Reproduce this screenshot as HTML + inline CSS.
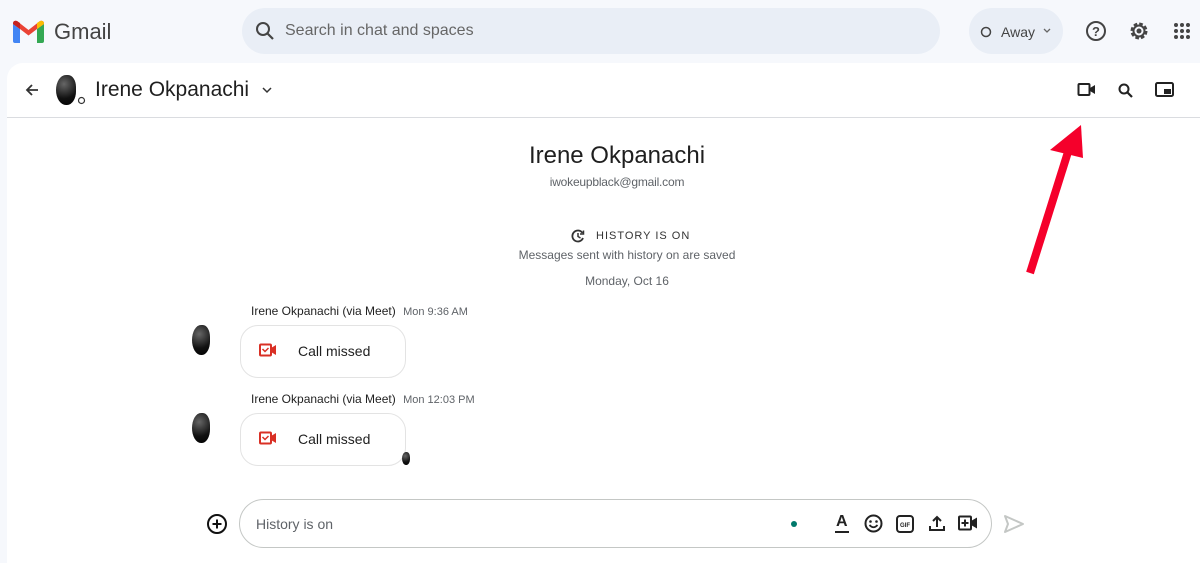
<!DOCTYPE html>
<html><head><meta charset="utf-8"><style>
*{margin:0;padding:0;box-sizing:border-box}
body{width:1200px;height:556px;background:#f6f8fc;font-family:"Liberation Sans",sans-serif;position:relative;overflow:hidden;color:#1f1f1f}
.abs{position:absolute}
.card{left:7px;top:63px;width:1200px;height:500px;background:#fff;border-radius:16px 0 0 0}
.search{left:242px;top:8px;width:698px;height:46px;background:#e9eef6;border-radius:24px}
.away{left:969px;top:8px;width:94px;height:46px;background:#e9eef6;border-radius:24px}
.txt{white-space:nowrap}
.bubble{width:166px;height:53px;border:1px solid #e3e3e3;border-radius:18px;background:#fff}
.av{width:18px;height:30px;border-radius:50% 40% 45% 50%;background:radial-gradient(circle at 40% 30%,#666,#111 60%,#000)}
</style></head><body>
<svg class="abs" style="left:13px;top:20px" width="31" height="23" viewBox="0 0 31 23">
<path d="M0 4 L0 21 Q0 23 2 23 L7 23 L7 9 Z" fill="#4285f4"/>
<path d="M24 9 L24 23 L29 23 Q31 23 31 21 L31 4 Z" fill="#34a853"/>
<path d="M0 4 Q0 0 4 1 L15.5 10 L27 1 Q31 0 31 4 L24 9 L15.5 15.5 L7 9 Z" fill="#ea4335"/>
<path d="M24 9 L24 3 L27 1 Q31 0 31 4 Z" fill="#fbbc04"/>
<path d="M0 4 Q0 0 4 1 L7 3 L7 9 Z" fill="#c5221f"/>
</svg>
<div class="abs txt" style="left:54px;top:19px;font-size:22px;color:#444">Gmail</div>
<div class="abs search"></div>
<svg class="abs" style="left:255px;top:21px" width="20" height="20" viewBox="0 0 20 20"><circle cx="8" cy="8" r="6" fill="none" stroke="#444" stroke-width="2"/><path d="M12.5 12.5 L18 18" stroke="#444" stroke-width="2.2"/></svg>
<div class="abs txt" style="left:285px;top:22px;font-size:16px;color:#666">Search in chat and spaces</div>
<div class="abs away"></div>
<svg class="abs" style="left:980px;top:26px" width="12" height="12"><circle cx="6" cy="6" r="4.5" fill="none" stroke="#444" stroke-width="1.5"/></svg>
<div class="abs txt" style="left:1001px;top:24px;font-size:14px;color:#444">Away</div>
<svg class="abs" style="left:1042px;top:27px" width="10" height="8"><path d="M2 2 L5 5 L8 2" fill="none" stroke="#666" stroke-width="1.3"/></svg>
<svg class="abs" style="left:1085px;top:20px" width="22" height="22"><circle cx="11" cy="11" r="9" fill="none" stroke="#444" stroke-width="2"/><text x="11" y="16" font-size="13" text-anchor="middle" fill="#444" font-family="Liberation Sans" font-weight="bold">?</text></svg>
<svg class="abs" style="left:1128px;top:20px" width="22" height="22" viewBox="0 0 22 22"><circle cx="11" cy="11" r="7" fill="none" stroke="#444" stroke-width="3" stroke-dasharray="3.5 2"/><circle cx="11" cy="11" r="5.5" fill="none" stroke="#444" stroke-width="2"/><circle cx="11" cy="11" r="2.5" fill="#444"/></svg>
<svg class="abs" style="left:1173px;top:22px" width="18" height="18"><g fill="#444"><circle cx="3" cy="3" r="2"/><circle cx="9" cy="3" r="2"/><circle cx="15" cy="3" r="2"/><circle cx="3" cy="9" r="2"/><circle cx="9" cy="9" r="2"/><circle cx="15" cy="9" r="2"/><circle cx="3" cy="15" r="2"/><circle cx="9" cy="15" r="2"/><circle cx="15" cy="15" r="2"/></g></svg>

<div class="abs card"></div>
<div class="abs" style="left:7px;top:117px;width:1193px;height:1px;background:#dadce0"></div>
<svg class="abs" style="left:24px;top:82px" width="16" height="16"><path d="M14 8 H3 M8 3 L3 8 L8 13" fill="none" stroke="#333" stroke-width="1.8"/></svg>
<div class="abs av" style="left:56px;top:75px;width:20px;height:30px"></div>
<svg class="abs" style="left:77px;top:96px" width="9" height="9"><circle cx="4.5" cy="4.5" r="3" fill="#fff" stroke="#333" stroke-width="1.2"/></svg>
<div class="abs txt" style="left:95px;top:78px;font-size:21px;color:#1f1f1f">Irene Okpanachi</div>
<svg class="abs" style="left:261px;top:86px" width="12" height="8"><path d="M2 2 L6 6 L10 2" fill="none" stroke="#333" stroke-width="1.5"/></svg>
<svg class="abs" style="left:1077px;top:82px" width="20" height="16"><rect x="1.5" y="2" width="11" height="11" rx="1" fill="none" stroke="#222" stroke-width="2"/><path d="M13 6 L18 3 V12 L13 9 Z" fill="#222"/></svg>
<svg class="abs" style="left:1117px;top:82px" width="18" height="18"><circle cx="7" cy="7" r="4.5" fill="none" stroke="#222" stroke-width="2"/><path d="M10.5 10.5 L15 15" stroke="#222" stroke-width="2.2"/></svg>
<svg class="abs" style="left:1155px;top:82px" width="20" height="16"><rect x="1" y="1" width="17" height="13" rx="1.5" fill="none" stroke="#222" stroke-width="2"/><rect x="9" y="7" width="7" height="5" fill="#222"/></svg>

<div class="abs txt" style="left:0;width:1234px;text-align:center;top:142px;font-size:24px;color:#1f1f1f">Irene Okpanachi</div>
<div class="abs txt" style="left:0;width:1234px;text-align:center;top:175px;font-size:12px;color:#5f6368;letter-spacing:-0.2px">iwokeupblack@gmail.com</div>
<svg class="abs" style="left:571px;top:229px" width="14" height="14"><path d="M11.5 4 A5.5 5.5 0 1 0 12 9" fill="none" stroke="#333" stroke-width="1.8"/><path d="M7 4 V7.5 L9.5 9" fill="none" stroke="#333" stroke-width="1.5"/><path d="M12.5 1.5 V5 H9" fill="none" stroke="#333" stroke-width="1.5"/></svg>
<div class="abs txt" style="left:596px;top:230px;font-size:11px;letter-spacing:1px;color:#333">HISTORY IS ON</div>
<div class="abs txt" style="left:0;width:1254px;text-align:center;top:248px;font-size:12px;color:#5f6368">Messages sent with history on are saved</div>
<div class="abs txt" style="left:0;width:1254px;text-align:center;top:274px;font-size:12px;color:#5f6368">Monday, Oct 16</div>

<div class="abs txt" style="left:251px;top:304px;font-size:12px;color:#1f1f1f">Irene Okpanachi (via Meet) <span style="font-size:11px;color:#5f6368;margin-left:4px">Mon 9:36 AM</span></div>
<div class="abs av" style="left:192px;top:325px"></div>
<div class="abs bubble" style="left:240px;top:325px"></div>
<svg class="abs" style="left:259px;top:343px" width="18" height="14"><rect x="1" y="1.5" width="11" height="11" rx="1" fill="none" stroke="#d93025" stroke-width="2"/><path d="M12 5 L17 2 V12 L12 9 Z" fill="#d93025"/><path d="M3.5 6 L6 8.5 L9.5 5" fill="none" stroke="#d93025" stroke-width="1.5"/></svg>
<div class="abs txt" style="left:298px;top:343px;font-size:14px;color:#1f1f1f">Call missed</div>

<div class="abs txt" style="left:251px;top:392px;font-size:12px;color:#1f1f1f">Irene Okpanachi (via Meet) <span style="font-size:11px;color:#5f6368;margin-left:4px">Mon 12:03 PM</span></div>
<div class="abs av" style="left:192px;top:413px"></div>
<div class="abs bubble" style="left:240px;top:413px"></div>
<svg class="abs" style="left:259px;top:431px" width="18" height="14"><rect x="1" y="1.5" width="11" height="11" rx="1" fill="none" stroke="#d93025" stroke-width="2"/><path d="M12 5 L17 2 V12 L12 9 Z" fill="#d93025"/><path d="M3.5 6 L6 8.5 L9.5 5" fill="none" stroke="#d93025" stroke-width="1.5"/></svg>
<div class="abs txt" style="left:298px;top:431px;font-size:14px;color:#1f1f1f">Call missed</div>
<div class="abs av" style="left:402px;top:452px;width:8px;height:13px"></div>

<svg class="abs" style="left:206px;top:513px" width="22" height="22"><circle cx="11" cy="11" r="9" fill="none" stroke="#111" stroke-width="2"/><path d="M11 6.5 V15.5 M6.5 11 H15.5" stroke="#111" stroke-width="2"/></svg>
<div class="abs" style="left:239px;top:499px;width:753px;height:49px;border:1px solid #c4c7c5;border-radius:25px"></div>
<div class="abs txt" style="left:256px;top:516px;font-size:14px;color:#5f6368">History is on</div>
<div class="abs" style="left:791px;top:521px;width:6px;height:6px;border-radius:50%;background:#00796b"></div>
<div class="abs txt" style="left:836px;top:513px;font-size:16px;font-weight:bold;color:#222">A</div>
<div class="abs" style="left:835px;top:531px;width:14px;height:2px;background:#222"></div>
<svg class="abs" style="left:864px;top:514px" width="19" height="19"><circle cx="9.5" cy="9.5" r="8" fill="none" stroke="#222" stroke-width="2"/><circle cx="6.5" cy="7.5" r="1.3" fill="#222"/><circle cx="12.5" cy="7.5" r="1.3" fill="#222"/><path d="M5.5 11 Q9.5 15.5 13.5 11" fill="none" stroke="#222" stroke-width="1.8"/></svg>
<svg class="abs" style="left:896px;top:515px" width="18" height="18"><rect x="1" y="1" width="16" height="16" rx="3" fill="none" stroke="#222" stroke-width="2"/><text x="9" y="12" font-size="6" text-anchor="middle" fill="#222" font-family="Liberation Sans" font-weight="bold">GIF</text></svg>
<svg class="abs" style="left:928px;top:514px" width="18" height="18"><path d="M9 13 V3 M5 7 L9 3 L13 7" fill="none" stroke="#222" stroke-width="2"/><path d="M2 12 V16 H16 V12" fill="none" stroke="#222" stroke-width="2"/></svg>
<svg class="abs" style="left:958px;top:515px" width="20" height="17"><rect x="1" y="1.5" width="12" height="13" rx="1" fill="none" stroke="#222" stroke-width="2"/><path d="M7 4.5 V11.5 M3.5 8 H10.5" stroke="#222" stroke-width="2"/><path d="M13 6 L19 2.5 V13.5 L13 10 Z" fill="#222"/></svg>
<svg class="abs" style="left:1003px;top:514px" width="22" height="20"><path d="M2 2 L20 10 L2 18 L5 10 Z" fill="none" stroke="#c4c7c5" stroke-width="2" stroke-linejoin="round"/></svg>

<svg class="abs" style="left:0;top:0" width="1200" height="556"><line x1="1030" y1="273" x2="1068" y2="152" stroke="#f5002b" stroke-width="8"/><polygon points="1081,125 1050,150 1083,158" fill="#f5002b"/></svg>
</body></html>
